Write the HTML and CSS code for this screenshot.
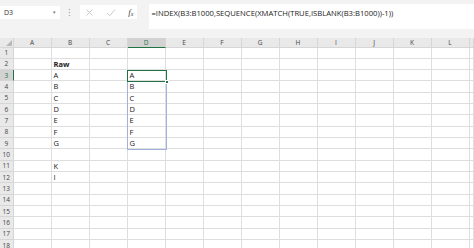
FILE: index.html
```html
<!DOCTYPE html>
<html lang="en">

<head>
    <meta charset="UTF-8">
    <meta name="viewport" content="width=device-width, initial-scale=1.0">
    <title>Spill range</title>
    <link rel="stylesheet" href="styles.css">
</head>

<body>
    <div class="toolbar">
        <div class="namebox">
            <span>D3</span>
            <span class="arrow">▾</span>
        </div>
        <div class="grip">
            <svg width="3" height="9" viewBox="0 0 3 9">
                <circle cx="1.5" cy="1.5" r="0.8" fill="#b4b4b4" />
                <circle cx="1.5" cy="4.5" r="0.8" fill="#b4b4b4" />
                <circle cx="1.5" cy="7.5" r="0.8" fill="#b4b4b4" />
            </svg>
        </div>
        <div class="fx-btns">
            <svg class="cancel" width="9" height="9" viewBox="0 0 9 9">
                <path d="M1.5 1.5 L7.5 7.5 M7.5 1.5 L1.5 7.5" stroke="#c4c4c4" stroke-width="0.9" fill="none" />
            </svg>
            <svg class="enter" width="10" height="9" viewBox="0 0 10 9">
                <path d="M1 5 L3.8 7.6 L9 1.4" stroke="#c4c4c4" stroke-width="0.9" fill="none" />
            </svg>
            <span class="fx">f<sub>x</sub></span>
        </div>
        <div class="formula">=INDEX(B3:B1000,SEQUENCE(XMATCH(TRUE,ISBLANK(B3:B1000))-1))</div>
    </div>

    <div class="sheet-wrap">
        <div id="sheet"></div>
        <div class="spill"></div>
        <div class="active"><span class="handle"></span></div>
    </div>

    <script>
        const sheet = document.querySelector('#sheet')
        const cols = ['A', 'B', 'C', 'D', 'E', 'F', 'G', 'H', 'I', 'J', 'K', 'L', '']//last one is the cut off column
        const rows = 18
        const activeCol = 'D'
        const activeRow = 3

        // cell values
        const data = {
            B2: 'Raw',
            B3: 'A', B4: 'B', B5: 'C', B6: 'D', B7: 'E', B8: 'F', B9: 'G',
            B11: 'K', B12: 'I',
            D3: 'A', D4: 'B', D5: 'C', D6: 'D', D7: 'E', D8: 'F', D9: 'G'
        }

        let html = '<div class="corner"><span></span></div>'
        cols.forEach(function (c) {
            html += `<div class="col-head${c == activeCol ? ' sel' : ''}">${c}</div>`
        })

        for (let r = 1; r <= rows; r++) {
            html += `<div class="row-head${r == activeRow ? ' sel' : ''}">${r}</div>`
            cols.forEach(function (c) {
                const key = c + r
                const val = data[key] || ''
                html += `<div class="cell${key == 'B2' ? ' bold' : ''}">${val}</div>`
            })
        }

        sheet.innerHTML = html
    </script>
</body>

</html>
```

FILE: styles.css
```css
* {
    box-sizing: border-box;
}

body {
    margin: 0;
    width: 474px;
    height: 248px;
    overflow: hidden;
    background-color: #fff;
    font-family: "Open Sans", "Noto Sans", sans-serif;
    color: #222;
}

/* formula bar */
.toolbar {
    height: 38px;
    background-color: #f3f3f3;
    display: flex;
    align-items: flex-start;
}

.namebox {
    width: 60px;
    height: 12.5px;
    margin-top: 6px;
    padding: 0 4px;
    background-color: #fff;
    display: flex;
    justify-content: space-between;
    align-items: center;
    font-size: 7px;
    color: #333;
}

.namebox .arrow {
    font-size: 5px;
    color: #777;
}

.grip {
    margin: 8px 0 0 8px;
    display: flex;
}

.fx-btns {
    width: 56.5px;
    height: 14px;
    margin: 5px 0 0 9px;
    padding: 0 3px 0 5px;
    background-color: #fff;
    display: flex;
    justify-content: space-between;
    align-items: center;
}

.fx {
    font-family: "Liberation Serif", serif;
    font-style: italic;
    font-size: 9px;
    color: #444;
    line-height: 1;
}

.fx sub {
    font-size: 6px;
    vertical-align: -1px;
}

.formula {
    flex: 1;
    height: 25px;
    margin: 4px 0 0 12px;
    padding: 4px 3px;
    background-color: #fff;
    font-size: 7.65px;
    color: #222;
    white-space: nowrap;
}

/* grid */
.sheet-wrap {
    position: relative;
}

#sheet {
    display: grid;
    grid-template-columns: 13.5px repeat(12, 38px) 1fr;
    grid-template-rows: 9.5px repeat(18, 11.33px);
}

.corner,
.col-head,
.row-head {
    background-color: #e9e9e9;
    color: #444;
    font-size: 6.5px;
    display: flex;
    justify-content: center;
    align-items: center;
    border-right: 1px solid #d6d6d6;
    border-bottom: 1px solid #d6d6d6;
}

.corner {
    position: relative;
}

.corner span {
    position: absolute;
    right: 1px;
    bottom: 1px;
    width: 0;
    height: 0;
    border-left: 6px solid transparent;
    border-bottom: 6px solid #b8b8b8;
}

.col-head.sel {
    background-color: #d2d2d2;
    border-bottom: 1.5px solid #217346;
    color: #217346;
}

.row-head.sel {
    background-color: #d2d2d2;
    border-right: 1.5px solid #217346;
    color: #217346;
}

.cell {
    border-right: 1px solid #dedede;
    border-bottom: 1px solid #dedede;
    font-size: 7.5px;
    padding-left: 2px;
    line-height: 10.5px;
    white-space: nowrap;
}

.cell.bold {
    font-weight: bold;
}

/* selection overlays */
.spill {
    position: absolute;
    left: 127px;
    top: 32px;
    width: 39.5px;
    height: 80px;
    border: 1px solid #9fb2de;
}

.active {
    position: absolute;
    left: 127px;
    top: 32px;
    width: 39.5px;
    height: 12px;
    border: 1.5px solid #217346;
}

.handle {
    position: absolute;
    right: -3px;
    bottom: -3px;
    width: 4px;
    height: 4px;
    background-color: #217346;
    border: 1px solid #fff;
}
```
